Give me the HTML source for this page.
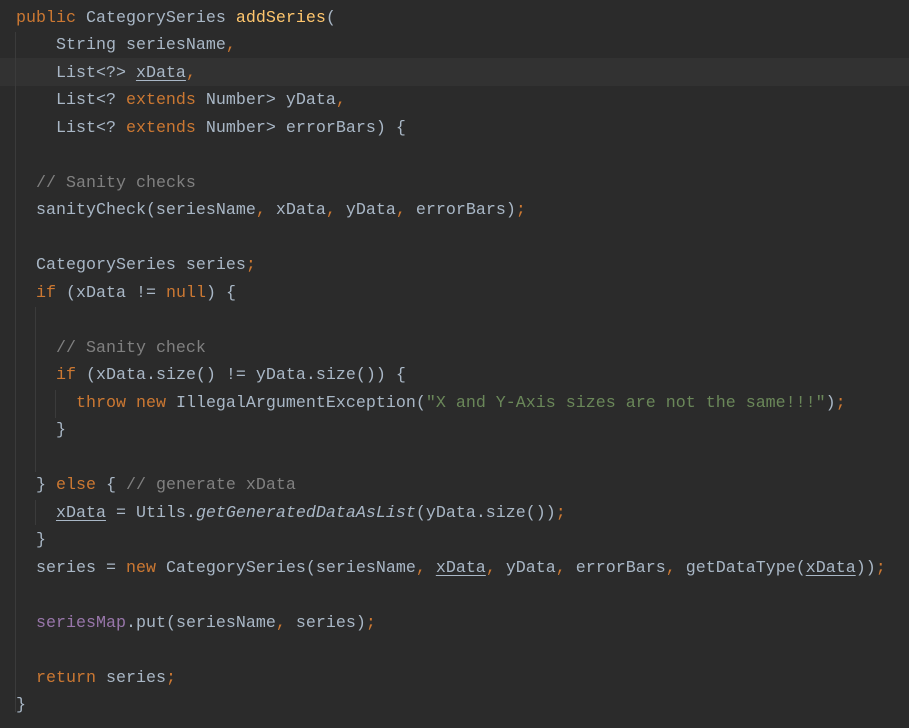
<!DOCTYPE html>
<html><head><meta charset="utf-8"><style>
html,body{margin:0;padding:0;background:#2b2b2b;width:909px;height:728px;overflow:hidden}
.code{position:absolute;left:16px;top:4.75px;font-family:"Liberation Mono",monospace;font-size:16.67px;color:#a9b7c6}
.l{height:27.5px;line-height:27.5px;white-space:pre}
.k{color:#cc7832}.m{color:#ffc66d}.c{color:#808080}.s{color:#6a8759}.f{color:#9876aa}.i{font-style:italic}
.u{text-decoration:underline;text-underline-offset:3px}
.hl{position:absolute;left:0;top:58.25px;width:909px;height:27.5px;background:#323232}
.g{position:absolute;width:1px;background:#3b3b3b}
</style></head><body>
<div class="hl"></div>
<div class="g" style="left:15px;top:32px;height:680px"></div>
<div class="g" style="left:35px;top:307px;height:165px"></div>
<div class="g" style="left:55px;top:390px;height:28px"></div>
<div class="g" style="left:35px;top:500px;height:25px"></div>
<div class="code">
<div class="l"><span class="k">public </span>CategorySeries <span class="m">addSeries</span>(</div>
<div class="l">    String seriesName<span class="k">,</span></div>
<div class="l">    List&lt;?&gt; <span class="u">xData</span><span class="k">,</span></div>
<div class="l">    List&lt;? <span class="k">extends </span>Number&gt; yData<span class="k">,</span></div>
<div class="l">    List&lt;? <span class="k">extends </span>Number&gt; errorBars) {</div>
<div class="l"> </div>
<div class="l">  <span class="c">// Sanity checks</span></div>
<div class="l">  sanityCheck(seriesName<span class="k">, </span>xData<span class="k">, </span>yData<span class="k">, </span>errorBars)<span class="k">;</span></div>
<div class="l"> </div>
<div class="l">  CategorySeries series<span class="k">;</span></div>
<div class="l">  <span class="k">if </span>(xData != <span class="k">null</span>) {</div>
<div class="l"> </div>
<div class="l">    <span class="c">// Sanity check</span></div>
<div class="l">    <span class="k">if </span>(xData.size() != yData.size()) {</div>
<div class="l">      <span class="k">throw new </span>IllegalArgumentException(<span class="s">"X and Y-Axis sizes are not the same!!!"</span>)<span class="k">;</span></div>
<div class="l">    }</div>
<div class="l"> </div>
<div class="l">  } <span class="k">else </span>{ <span class="c">// generate xData</span></div>
<div class="l">    <span class="u">xData</span> = Utils.<span class="i">getGeneratedDataAsList</span>(yData.size())<span class="k">;</span></div>
<div class="l">  }</div>
<div class="l">  series = <span class="k">new </span>CategorySeries(seriesName<span class="k">, </span><span class="u">xData</span><span class="k">, </span>yData<span class="k">, </span>errorBars<span class="k">, </span>getDataType(<span class="u">xData</span>))<span class="k">;</span></div>
<div class="l"> </div>
<div class="l">  <span class="f">seriesMap</span>.put(seriesName<span class="k">, </span>series)<span class="k">;</span></div>
<div class="l"> </div>
<div class="l">  <span class="k">return </span>series<span class="k">;</span></div>
<div class="l">}</div>
</div>
</body></html>
